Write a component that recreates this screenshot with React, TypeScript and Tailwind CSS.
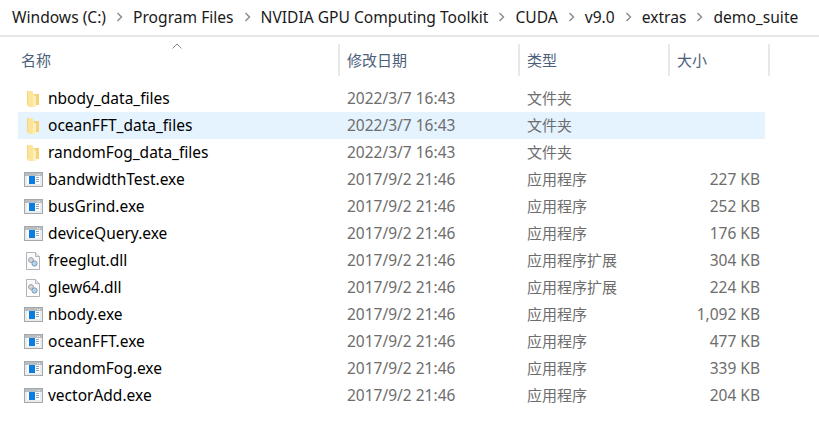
const files = [
  { name: "nbody_data_files", date: "2022/3/7 16:43", type: "文件夹", size: "", icon: "folder" },
  { name: "oceanFFT_data_files", date: "2022/3/7 16:43", type: "文件夹", size: "", icon: "folder", selected: true },
  { name: "randomFog_data_files", date: "2022/3/7 16:43", type: "文件夹", size: "", icon: "folder" },
  { name: "bandwidthTest.exe", date: "2017/9/2 21:46", type: "应用程序", size: "227 KB", icon: "exe" },
  { name: "busGrind.exe", date: "2017/9/2 21:46", type: "应用程序", size: "252 KB", icon: "exe" },
  { name: "deviceQuery.exe", date: "2017/9/2 21:46", type: "应用程序", size: "176 KB", icon: "exe" },
  { name: "freeglut.dll", date: "2017/9/2 21:46", type: "应用程序扩展", size: "304 KB", icon: "dll" },
  { name: "glew64.dll", date: "2017/9/2 21:46", type: "应用程序扩展", size: "224 KB", icon: "dll" },
  { name: "nbody.exe", date: "2017/9/2 21:46", type: "应用程序", size: "1,092 KB", icon: "exe" },
  { name: "oceanFFT.exe", date: "2017/9/2 21:46", type: "应用程序", size: "477 KB", icon: "exe" },
  { name: "randomFog.exe", date: "2017/9/2 21:46", type: "应用程序", size: "339 KB", icon: "exe" },
  { name: "vectorAdd.exe", date: "2017/9/2 21:46", type: "应用程序", size: "204 KB", icon: "exe" },
];

const crumbs = ["Windows (C:)", "Program Files", "NVIDIA GPU Computing Toolkit", "CUDA", "v9.0", "extras", "demo_suite"];

function Chevron() {
  return (
    <svg width="7" height="10" viewBox="0 0 7 10" className="mx-[10px] shrink-0">
      <path d="M1.5 1 L5.5 5 L1.5 9" fill="none" stroke="#8a8a8a" strokeWidth="1.4" />
    </svg>
  );
}

function FolderIcon() {
  return (
    <svg width="12" height="16" viewBox="0 0 12 16">
      <path d="M0 0 H5 L6 1 V16 H2 L0 14 Z" fill="#fce49a" />
      <path d="M0 0 H1 V14 H0 Z" fill="#f6d67c" />
      <path d="M6 3 H12 V14 H6 Z" fill="#f7d276" />
      <path d="M6 3 L9 6 V16 H6 Z" fill="#feefbb" />
    </svg>
  );
}

function ExeIcon() {
  return (
    <svg width="19" height="15" viewBox="0 0 19 15">
      <rect x="0.5" y="0.5" width="18" height="14" fill="#e9ebed" stroke="#a4a9ae" />
      <rect x="1" y="1" width="17" height="3" fill="#b8bdc2" />
      <path d="M13 2.5 H14 M15 2.5 H16" stroke="#eef0f2" strokeWidth="1" />
      <rect x="3" y="4" width="13" height="8" fill="#ffffff" />
      <rect x="5" y="4" width="6" height="8" fill="#0b7de0" />
      <path d="M12 5.5 H15 M12 7.5 H15 M12 9.5 H15" stroke="#8fa6bb" strokeWidth="1" />
    </svg>
  );
}

function DllIcon() {
  return (
    <svg width="14" height="18" viewBox="0 0 14 18">
      <path d="M0.5 0.5 H9.5 L13.5 4.5 V17.5 H0.5 Z" fill="#fbfbfb" stroke="#b0b4b8" />
      <path d="M9.5 0.5 V4.5 H13.5" fill="#e6e8ea" stroke="#b0b4b8" />
      <circle cx="5" cy="8" r="2.4" fill="#d8dadc" stroke="#989ca0" />
      <circle cx="8.5" cy="11.5" r="2.6" fill="#b7d3ea" stroke="#7b9ab5" />
    </svg>
  );
}

function FileIcon({ kind }: { kind: string }) {
  if (kind === "folder") return <FolderIcon />;
  if (kind === "exe") return <ExeIcon />;
  return <DllIcon />;
}

export default function App() {
  return (
    <div className="flex h-[430px] w-[819px] flex-col overflow-hidden bg-white font-['Noto_Sans','Noto_Sans_CJK_SC',sans-serif] text-[15.5px]">
      <div className="flex h-[37px] shrink-0 items-center border-b-2 border-[#e8e8e8] pl-[12px] text-[15.6px] text-[#1a1a1a]">
        {crumbs.map((c, i) => (
          <div key={c} className="flex items-center">
            {i > 0 && <Chevron />}
            <span className="whitespace-nowrap">{c}</span>
          </div>
        ))}
      </div>

      <div className="relative mt-[7px] grid h-[32px] shrink-0 grid-cols-[322px_180px_150px_100px] pl-[18px] text-[15px] text-[#4c607a]">
        <span className="absolute left-[172px] top-[-1px] text-[#8a8a8a]">
          <svg width="10" height="6" viewBox="0 0 10 6" className="block">
            <path d="M0.5 5.5 L5 1 L9.5 5.5" fill="none" stroke="currentColor" />
          </svg>
        </span>
        {["名称", "修改日期", "类型", "大小"].map((h, i) => (
          <div key={h} className={`flex items-center border-r-2 border-[#e8e8e8] ${i === 0 ? "pl-[3px]" : "pl-[7px]"}`}>
            {h}
          </div>
        ))}
      </div>

      <div className="mt-[9px] flex flex-col pl-[18px]">
        {files.map((f) => (
          <div
            key={f.name}
            className={`grid h-[27px] w-[747px] grid-cols-[322px_180px_150px_95px] items-center ${f.selected ? "bg-[#e5f3ff]" : ""}`}
          >
            <div className="flex items-center">
              <span className="flex w-[30px] justify-center">
                <FileIcon kind={f.icon} />
              </span>
              <span className="text-black">{f.name}</span>
            </div>
            <span className="pl-[7px] text-[#6d6d6d]">{f.date}</span>
            <span className="pl-[7px] text-[15px] text-[#6d6d6d]">{f.type}</span>
            <span className="pr-[5px] text-right text-[#6d6d6d]">{f.size}</span>
          </div>
        ))}
      </div>
    </div>
  );
}
